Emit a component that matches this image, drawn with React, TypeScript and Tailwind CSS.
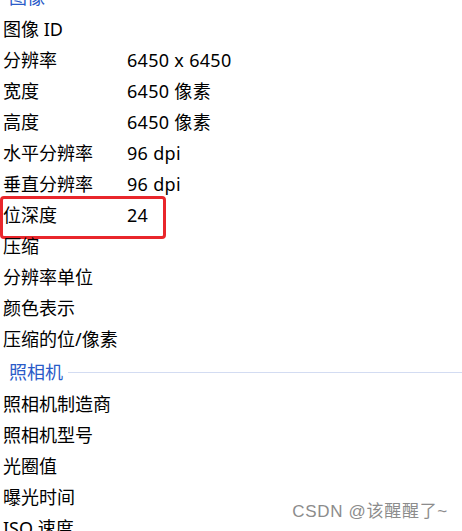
const IMAGE_ROWS: [string, string][] = [
  ["图像 ID", ""],
  ["分辨率", "6450 x 6450"],
  ["宽度", "6450 像素"],
  ["高度", "6450 像素"],
  ["水平分辨率", "96 dpi"],
  ["垂直分辨率", "96 dpi"],
  ["位深度", "24"],
  ["压缩", ""],
  ["分辨率单位", ""],
  ["颜色表示", ""],
  ["压缩的位/像素", ""],
];

const CAMERA_ROWS: [string, string][] = [
  ["照相机制造商", ""],
  ["照相机型号", ""],
  ["光圈值", ""],
  ["曝光时间", ""],
  ["ISO 速度", ""],
];

function Section({ title }: { title: string }) {
  return (
    <div className="flex h-[34px] items-center pl-[9px] pt-[1px]">
      <span className="text-[#2a5bc8]">{title}</span>
      <div className="ml-[5px] h-px flex-1 bg-[#d3dcf2]" />
    </div>
  );
}

function Row({ label, value }: { label: string; value: string }) {
  return (
    <div className="relative flex h-[31px] items-center pl-[3px]">
      <span className="w-[124px] shrink-0">{label}</span>
      <span className="tracking-[0.3px]">{value}</span>
      {label === "位深度" && (
        <div className="absolute -top-[4px] -bottom-[8px] left-0 w-[166px] rounded-[4px] border-[3px] border-[#e9262b]" />
      )}
    </div>
  );
}

export default function App() {
  return (
    <div className="relative h-[531px] w-[462px] overflow-hidden bg-white text-[18px] text-black [font-family:'Noto_Sans','Noto_Sans_CJK_SC',sans-serif]">
      <div className="-mt-[20px] flex flex-col">
        <Section title="图像" />
        {IMAGE_ROWS.map(([l, v]) => (
          <Row key={l} label={l} value={v} />
        ))}
        <Section title="照相机" />
        {CAMERA_ROWS.map(([l, v]) => (
          <Row key={l} label={l} value={v} />
        ))}
      </div>
      <div className="absolute bottom-[7px] right-[14px] text-[17px] tracking-[0.7px] text-[#8c8c8c] [font-family:'Liberation_Sans','Noto_Sans_CJK_SC',sans-serif]">
        CSDN @该醒醒了~
      </div>
    </div>
  );
}
